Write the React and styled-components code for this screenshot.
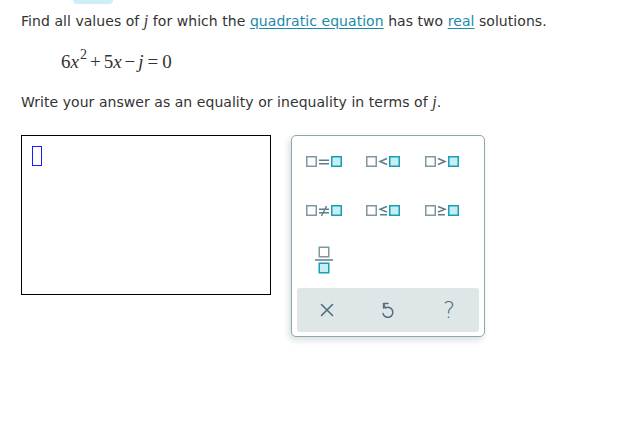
import React from "react";
import styled, { createGlobalStyle } from "styled-components";

const Global = createGlobalStyle`
  html, body { margin: 0; padding: 0; background: #fff; }
  body { font-family: "DejaVu Sans", Verdana, sans-serif; color: #333; }
`;

const Page = styled.div`
  width: 634px;
  height: 430px;
  overflow: hidden;
`;

const Tab = styled.div`
  margin-left: 73px;
  width: 40px;
  height: 4px;
  background: #cdeef4;
  border-radius: 0 0 8px 8px;
`;

const Content = styled.div`
  padding-left: 21px;
`;

const Para = styled.p`
  margin: ${(p) => p.$mt || 0}px 0 0;
  font-size: 14px;
  line-height: 17px;
  letter-spacing: 0.05px;
`;

const Var = styled.span`
  font-family: "Liberation Serif", "Times New Roman", serif;
  font-style: italic;
  font-size: 16px;
`;

const Link = styled.a`
  color: #1b8bab;
  text-decoration: underline;
  text-underline-offset: 2px;
  cursor: pointer;
`;

const Equation = styled.div`
  margin: 21px 0 0 40px;
  font-family: "Liberation Serif", "Times New Roman", serif;
  font-size: 19px;
  line-height: 22px;
  color: #333;
`;

const I = styled.i`
  font-style: italic;
`;

const Sup = styled.sup`
  font-size: 14px;
  vertical-align: 0;
  position: relative;
  top: -9px;
  margin-left: 1px;
`;

const Op = styled.span`
  margin: 0 ${(p) => p.$m ?? 2}px;
`;

const Work = styled.div`
  display: flex;
  gap: 20px;
  margin-top: 24px;
  align-items: flex-start;
`;

const AnswerBox = styled.div`
  width: 250px;
  height: 160px;
  border: 1px solid #000;
  padding: 10px 0 0 10px;
  box-sizing: border-box;
`;

const Cursor = styled.div`
  width: 8px;
  height: 18px;
  border: 1px solid #1a1aff;
`;

const Keypad = styled.div`
  box-sizing: border-box;
  width: 194px;
  height: 202px;
  border: 1px solid #8fa6ab;
  border-radius: 5px;
  box-shadow: -2px 3px 6px rgba(40, 70, 80, 0.18);
  padding: 4px 0 4px;
  display: flex;
  flex-direction: column;
  background: #fff;
`;

const Keys = styled.div`
  display: grid;
  grid-template-columns: repeat(3, 59px);
  grid-auto-rows: 44px;
  row-gap: 5px;
  padding-left: 2px;
`;

const Key = styled.button`
  border: 0;
  background: transparent;
  padding: 0;
  display: flex;
  align-items: center;
  justify-content: center;
  cursor: pointer;
`;

const Bar = styled.div`
  margin: 6px 5px 0;
  height: 44px;
  border-radius: 3px;
  background: #dfe6e8;
  display: grid;
  grid-template-columns: repeat(3, 1fr);
`;

const BarKey = styled.button`
  border: 0;
  background: transparent;
  padding: 0;
  display: flex;
  align-items: center;
  justify-content: center;
  color: #4d6f7b;
  cursor: pointer;
`;

const Help = styled.span`
  font-family: "DejaVu Sans", sans-serif;
  font-size: 23px;
  line-height: 1;
  color: #4d6f7b;
  font-weight: 200;
  margin-left: 1px;
`;

const GRAY = "#7f979e";
const TEAL = "#16a0b5";
const FILL = "#c8eef4";
const SYM = "#5e7c87";

const Rel = ({ children, w = 36 }) => (
  <svg width={w} height="12" viewBox={`0 0 ${w} 12`}>
    <rect x="0.75" y="0.75" width="9.5" height="9.5" fill="#fff" stroke={GRAY} strokeWidth="1.5" />
    {children}
    <rect x={w - 10.25} y="0.75" width="9.5" height="9.5" fill={FILL} stroke={TEAL} strokeWidth="1.5" />
  </svg>
);

const Frac = () => (
  <svg width="18" height="28" viewBox="0 0 18 28">
    <rect x="4.25" y="1.25" width="9.5" height="9.5" fill="#fff" stroke={GRAY} strokeWidth="1.5" />
    <line x1="0" y1="14" x2="18" y2="14" stroke={SYM} strokeWidth="1.5" />
    <rect x="4.25" y="17.25" width="9.5" height="9.5" fill={FILL} stroke={TEAL} strokeWidth="1.5" />
  </svg>
);

const XIcon = () => (
  <svg width="14" height="14" viewBox="0 0 14 14">
    <path d="M1.5 1.5 L12.5 12.5 M12.5 1.5 L1.5 12.5" stroke="#4d6f7b" strokeWidth="1.6" strokeLinecap="round" />
  </svg>
);

const UndoIcon = () => (
  <svg width="14" height="17" viewBox="0 0 14 17">
    <path
      d="M2.6 1.8 L4.2 6.1 A5 5 0 1 1 2 11.6"
      fill="none"
      stroke="#4d6f7b"
      strokeWidth="1.5"
      strokeLinecap="round"
      strokeLinejoin="round"
    />
    <path d="M7 1.6 L2.6 1.6 L2.6 6" fill="none" stroke="#4d6f7b" strokeWidth="1.5" strokeLinecap="round" strokeLinejoin="round" />
  </svg>
);

export default function App() {
  return (
    <Page>
      <Global />
      <Tab />
      <Content>
        <Para $mt={8}>
          Find all values of <Var>j</Var> for which the <Link>quadratic equation</Link> has two{" "}
          <Link>real</Link> solutions.
        </Para>
        <Equation>
          6<I>x</I>
          <Sup>2</Sup>
          <Op $m={3}>+</Op>5<I>x</I>
          <Op $m={3}>−</Op>
          <I>j</I>
          <Op $m={4}>=</Op>0
        </Equation>
        <Para $mt={18}>
          Write your answer as an equality or inequality in terms of <Var>j</Var>.
        </Para>
        <Work>
          <AnswerBox>
            <Cursor />
          </AnswerBox>
          <Keypad>
            <Keys>
              <Key aria-label="equals">
                <Rel>
                  <path d="M13 4.3 H23 M13 7.7 H23" stroke={SYM} strokeWidth="1.6" />
                </Rel>
              </Key>
              <Key aria-label="less than">
                <Rel w={34}>
                  <path d="M21 2.5 L14 5.5 L21 8.5" fill="none" stroke={SYM} strokeWidth="1.5" />
                </Rel>
              </Key>
              <Key aria-label="greater than">
                <Rel w={34}>
                  <path d="M13 2.5 L20 5.5 L13 8.5" fill="none" stroke={SYM} strokeWidth="1.5" />
                </Rel>
              </Key>
              <Key aria-label="not equal">
                <Rel>
                  <path d="M13 4.3 H23 M13 7.7 H23 M20.5 1 L15.5 11" stroke={SYM} strokeWidth="1.4" />
                </Rel>
              </Key>
              <Key aria-label="less or equal">
                <Rel w={34}>
                  <path d="M21 1.5 L14 4.3 L21 7 M14 9.8 H21" fill="none" stroke={SYM} strokeWidth="1.4" />
                </Rel>
              </Key>
              <Key aria-label="greater or equal">
                <Rel w={34}>
                  <path d="M13 1.5 L20 4.3 L13 7 M13 9.8 H20" fill="none" stroke={SYM} strokeWidth="1.4" />
                </Rel>
              </Key>
              <Key aria-label="fraction">
                <Frac />
              </Key>
            </Keys>
            <Bar>
              <BarKey aria-label="clear">
                <XIcon />
              </BarKey>
              <BarKey aria-label="undo">
                <UndoIcon />
              </BarKey>
              <BarKey aria-label="help">
                <Help>?</Help>
              </BarKey>
            </Bar>
          </Keypad>
        </Work>
      </Content>
    </Page>
  );
}
